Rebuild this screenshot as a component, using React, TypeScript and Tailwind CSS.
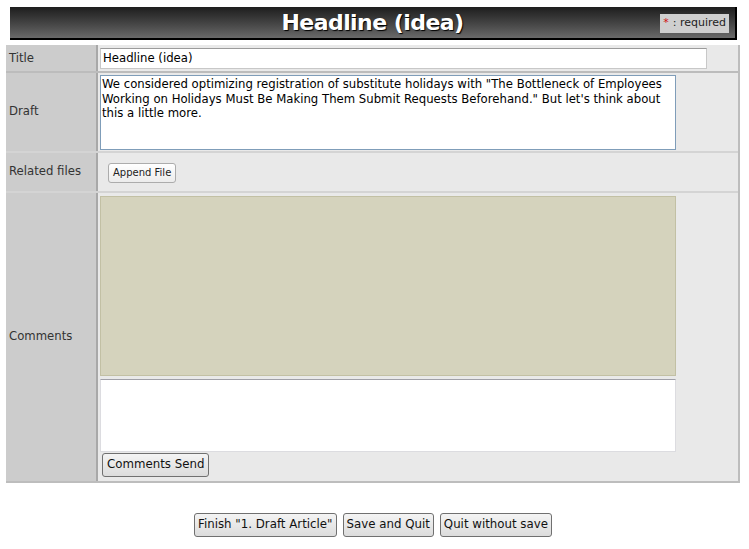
import React from "react";

const font = { fontFamily: '"DejaVu Sans", Verdana, sans-serif' };

const btn =
  "border border-[#707070] rounded-[3px] bg-gradient-to-b from-[#f4f4f4] to-[#dcdcdc] text-[#111] leading-none";

export default function App() {
  const draft =
    'We considered optimizing registration of substitute holidays with "The Bottleneck of Employees Working on Holidays Must Be Making Them Submit Requests Beforehand." But let\'s think about this a little more.';

  return (
    <div className="w-[749px] h-[549px] bg-white text-[#333]" style={font}>
      <div className="pt-[7px] pl-[10px] pr-[12px]">
        <div className="h-[33px] relative flex items-center justify-center bg-gradient-to-b from-[#1e1e1e] to-[#6a6a6a] border-r-2 border-b-2 border-black">
          <h1 className="text-white font-bold text-[22px] tracking-tight [text-shadow:1px_1px_1px_#000]">
            Headline (idea)
          </h1>
          <div className="absolute right-[6px] top-[7px] h-[19px] px-[3px] bg-[#cfcfcf] flex items-center text-[11px] text-[#222]">
            <span className="text-[#d01010] mr-[4px]">*</span>: required
          </div>
        </div>
      </div>

      <div className="mt-[5px] ml-[6px] w-[734px] border-r-2 border-b-2 border-[#bdbdbd] text-[11.7px]">
        <div className="flex h-[28px] border-b-2 border-[#bcbcbc]">
          <div className="w-[92px] bg-[#cccccc] border-r-2 border-[#a8a8a8] flex items-center pl-[3px] pt-[2px]">Title</div>
          <div className="flex-1 bg-[#e9e9e9] pl-[2px] pt-[3px]">
            <div className="w-[607px] h-[21px] bg-white border border-[#c8c8c8] border-t-[#9a9a9a] flex items-center pl-[2px] text-[#000]">
              Headline (idea)
            </div>
          </div>
        </div>

        <div className="flex h-[80px] border-b-2 border-[#d4d4d4]">
          <div className="w-[92px] bg-[#cccccc] border-r-2 border-[#a8a8a8] flex items-center pl-[3px]">Draft</div>
          <div className="flex-1 bg-[#e9e9e9] pl-[2px] pt-[2px]">
            <div className="w-[576px] h-[75px] bg-white border border-[#7f9db9] pl-[1px] pt-[1px] leading-[14.5px] text-[#000]">
              {draft}
            </div>
          </div>
        </div>

        <div className="flex h-[40px] border-b-2 border-[#d4d4d4]">
          <div className="w-[92px] bg-[#cccccc] border-r-2 border-[#a8a8a8] flex items-center pl-[3px]">Related files</div>
          <div className="flex-1 bg-[#e9e9e9] pl-[10px] pt-[1px] flex items-center">
            <button className="h-[20px] px-[4px] border border-[#acacac] rounded-[3px] bg-gradient-to-b from-white to-[#ececec] text-[10px] text-[#222]">
              Append File
            </button>
          </div>
        </div>

        <div className="flex h-[288px]">
          <div className="w-[92px] bg-[#cccccc] border-r-2 border-[#a8a8a8] flex items-center pl-[3px]">Comments</div>
          <div className="flex-1 bg-[#e9e9e9] pl-[2px] pt-[3px] flex flex-col">
            <div className="w-[576px] h-[180px] bg-[#d5d3bd] border border-[#c2c0a4]" />
            <div className="w-[576px] h-[73px] mt-[3px] bg-white border border-[#dcdce0] border-t-[#a0a0a8]" />
            <div className="mt-[1px] pl-[2px]">
              <button className={`${btn} h-[24px] px-[4px] text-[11.8px]`}>Comments Send</button>
            </div>
          </div>
        </div>
      </div>

      <div className="mt-[30px] flex justify-center gap-[6px] pr-[3px]">
        <button className={`${btn} h-[24px] px-[3px] text-[11.8px]`}>Finish "1. Draft Article"</button>
        <button className={`${btn} h-[24px] px-[3px] text-[11.8px]`}>Save and Quit</button>
        <button className={`${btn} h-[24px] px-[3px] text-[11.8px]`}>Quit without save</button>
      </div>
    </div>
  );
}
